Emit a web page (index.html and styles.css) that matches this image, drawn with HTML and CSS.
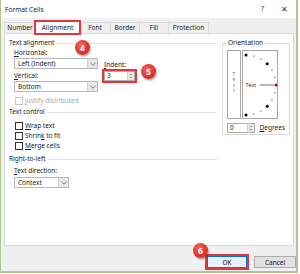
FILE: index.html
```html
<!DOCTYPE html>
<html>
<head>
<meta charset="utf-8">
<title>Format Cells</title>
<link rel="stylesheet" href="styles.css">
</head>
<body>
<div class="window">
  <div class="titlebar">
    <span class="title">Format Cells</span>
    <span class="tb-btns"><span class="help">?</span><span class="close">✕</span></span>
  </div>
  <div class="client">
    <div class="tabs">
      <div class="tab t-number">Number</div>
      <div class="tab t-align active">Alignment</div>
      <div class="tab t-font">Font</div>
      <div class="tab t-border">Border</div>
      <div class="tab t-fill">Fill</div>
      <div class="tab t-prot">Protection</div>
    </div>
    <div class="panel">
      <div class="leftcol">
        <div class="group-h"><span>Text alignment</span><i class="rule"></i></div>
        <div class="align-grid">
          <div class="col1">
            <div class="lbl"><u>H</u>orizontal:</div>
            <div class="select w84"><span class="val">Left (Indent)</span><span class="arrow"><svg width="6" height="4" viewBox="0 0 6 4"><polyline points="0.5,0.8 3,3.2 5.5,0.8" fill="none" stroke="#606060" stroke-width="0.8"/></svg></span></div>
            <div class="lbl mt2"><u>V</u>ertical:</div>
            <div class="select w84"><span class="val">Bottom</span><span class="arrow"><svg width="6" height="4" viewBox="0 0 6 4"><polyline points="0.5,0.8 3,3.2 5.5,0.8" fill="none" stroke="#606060" stroke-width="0.8"/></svg></span></div>
          </div>
          <div class="col2">
            <div class="lbl"><u>I</u>ndent:</div>
            <div class="spin indent-spin"><span class="val">3</span><span class="spin-btns"><span class="up"></span><span class="down"></span></span></div>
          </div>
        </div>
        <div class="check disabled mt4"><span class="box"></span><span><u>J</u>ustify distributed</span></div>
        <div class="group-h mt1"><span>Text control</span><i class="rule"></i></div>
        <div class="check mt4"><span class="box"></span><span><u>W</u>rap text</span></div>
        <div class="check"><span class="box"></span><span>Shrin<u>k</u> to fit</span></div>
        <div class="check"><span class="box"></span><span><u>M</u>erge cells</span></div>
        <div class="group-h mt3"><span>Right-to-left</span><i class="rule short"></i></div>
        <div class="lbl sub mt2"><u>T</u>ext direction:</div>
        <div class="select w55 sub mt1"><span class="val">Context</span><span class="arrow"><svg width="6" height="4" viewBox="0 0 6 4"><polyline points="0.5,0.8 3,3.2 5.5,0.8" fill="none" stroke="#606060" stroke-width="0.8"/></svg></span></div>
      </div>
      <fieldset class="orient">
        <legend>Orientation</legend>
        <div class="dial">
          <div class="vtext"><span>T</span><span>e</span><span>x</span><span>t</span></div>
          <div class="arc">
            <svg width="34" height="67" viewBox="0 0 34 67">
              <g fill="#000">
                <circle cx="3" cy="4" r="1.5"/>
                <circle cx="10.8" cy="5" r="0.55"/>
                <circle cx="18" cy="8" r="0.55"/>
                <circle cx="24.2" cy="12.8" r="1.5"/>
                <circle cx="29" cy="19" r="0.55"/>
                <circle cx="32" cy="26.2" r="0.55"/>
                <circle cx="32" cy="41.8" r="0.55"/>
                <circle cx="29" cy="49" r="0.55"/>
                <circle cx="24.2" cy="55.2" r="1.5"/>
                <circle cx="18" cy="60" r="0.55"/>
                <circle cx="10.8" cy="63" r="0.55"/>
                <circle cx="3" cy="64" r="1.5"/>
              </g>
              <text x="2.6" y="35.8" class="dial-text">Text</text>
              <line x1="17" y1="34" x2="31" y2="34" stroke="#333" stroke-width="0.7"/>
              <circle cx="33" cy="34" r="1.5" fill="#c00000"/>
            </svg>
          </div>
        </div>
        <div class="deg-row">
          <div class="spin deg-spin"><span class="val">0</span><span class="spin-btns"><span class="up"></span><span class="down"></span></span></div>
          <span class="deg-lbl"><u>D</u>egrees</span>
        </div>
      </fieldset>
    </div>
    <div class="buttons">
      <div class="btn ok">OK</div>
      <div class="btn">Cancel</div>
    </div>
  </div>
  <span class="badge b4">4</span>
  <span class="badge b5">5</span>
  <span class="badge b6">6</span>
</div>
</body>
</html>
```
FILE: styles.css
```css
* { box-sizing: border-box; }
html, body { margin: 0; padding: 0; background: #ffffff; }
body {
  width: 300px;
  height: 274px;
  overflow: hidden;
  font-family: "Noto Sans", "Open Sans", sans-serif;
  font-size: 6.5px;
  color: #1a1a1a;
}
.window {
  position: relative;
  width: 298px;
  height: 273px;
  border-left: 1px solid #b2c78a;
  border-right: 2px solid #b2c78a;
  border-bottom: 2px solid #b2c78a;
  background: #f0f0f0;
  display: flex;
  flex-direction: column;
}
.titlebar {
  height: 18px;
  background: #ffffff;
  display: flex;
  align-items: center;
  justify-content: space-between;
  padding: 0 8px 0 4px;
}
.title { font-size: 6.6px; color: #222; }
.tb-btns { display: flex; gap: 17px; color: #333; }
.help { font-size: 7px; }
.close { font-size: 7.5px; }
.client {
  flex: 1;
  padding: 4px 2px 0 3px;
  display: flex;
  flex-direction: column;
}
.tabs {
  display: flex;
  height: 11px;
  align-items: flex-end;
}
.tab {
  height: 11px;
  border: 1px solid #d9d9d9;
  border-bottom: none;
  margin-right: -1px;
  background: #f0f0f0;
  display: flex;
  align-items: center;
  justify-content: center;
  line-height: 10px;
  color: #222;
}
.t-number { width: 32px; }
.t-align { width: 45px; }
.t-font { width: 32px; }
.t-border { width: 30px; }
.t-fill { width: 30px; }
.t-prot { width: 41px; }
.tab.active {
  background: #ffffff;
  height: 13px;
  margin-bottom: -1px;
  position: relative;
  z-index: 2;
  outline: 2px solid #e8343b;
  outline-offset: -1px;
}
.panel {
  height: 213px;
  background: #ffffff;
  border: 1px solid #d9d9d9;
  padding: 4px 2px 0 4px;
  display: flex;
  gap: 5px;
  align-items: flex-start;
}
.leftcol { width: 208px; display: flex; flex-direction: column; }
.group-h {
  display: flex;
  align-items: center;
  gap: 3px;
  height: 10px;
  line-height: 10px;
  color: #222;
}
.rule { flex: 1; height: 1px; background: #e3e3e3; }
.lbl { height: 10px; line-height: 10px; }
.mt1 { margin-top: 1px; }
.mt2 { margin-top: 2px; }
.mt3 { margin-top: 3px; }
.mt4 { margin-top: 4px; }
.sub { margin-left: 5px; }
.align-grid {
  margin-left: 5px;
  display: grid;
  grid-template-columns: 84px auto;
  column-gap: 6px;
}
.col1 { display: flex; flex-direction: column; }
.col2 { padding-top: 12px; display: flex; flex-direction: column; align-items: flex-start; }
.col2 .lbl { margin-bottom: 1px; }
.select {
  height: 11px;
  border: 1px solid #b9b9b9;
  background: #fff;
  display: flex;
  align-items: stretch;
}
.w84 { width: 84px; }
.w55 { width: 55px; }
.select .val { flex: 1; line-height: 9px; padding-left: 3px; }
.select .arrow {
  width: 10px;
  background: #e8e8e8;
  border-left: 1px solid #d0d0d0;
  display: flex;
  align-items: center;
  justify-content: center;
}
.spin {
  height: 10px;
  border: 1px solid #b0b0b0;
  background: #fff;
  display: flex;
}
.spin .val { flex: 1; line-height: 8px; padding-left: 2px; }
.spin-btns {
  width: 7px;
  background: #e6e6e6;
  border-left: 1px solid #d0d0d0;
  display: flex;
  flex-direction: column;
  align-items: center;
  justify-content: space-evenly;
}
.up, .down { width: 0; height: 0; border-left: 1.6px solid transparent; border-right: 1.6px solid transparent; }
.up { border-bottom: 1.8px solid #404040; }
.down { border-top: 1.8px solid #404040; }
.indent-spin {
  width: 31px;
  outline: 2px solid #e8343b;
  outline-offset: 0px;
}
.check {
  height: 10px;
  display: flex;
  align-items: center;
  gap: 2px;
  margin-left: 6px;
  line-height: 10px;
}
.check .box { width: 8px; height: 8px; border: 1px solid #333; background: #fff; }
.check.disabled { color: #a8a8a8; }
.check.disabled .box { border-color: #c8c8c8; }
.orient {
  width: 68px;
  margin: 0;
  padding: 0 4px 1px 4px;
  border: 1px solid #dcdcdc;
  min-width: 0;
}
.orient legend {
  padding: 0 1px;
  line-height: 10px;
  height: 10px;
  color: #222;
}
.dial { display: flex; gap: 1px; margin-top: 2px; height: 69px; }
.vtext {
  width: 14px;
  border: 1px solid #a8a8a8;
  display: flex;
  flex-direction: column;
  align-items: center;
  justify-content: center;
  padding-bottom: 4px;
  color: #808080;
  font-size: 5px;
}
.vtext span { display: block; line-height: 5.5px; height: 5.5px; }
.arc { width: 36px; border: 1px solid #a8a8a8; }
.arc svg { display: block; overflow: visible; }
.dial-text { font-family: "Noto Sans", "Open Sans", sans-serif; font-size: 5.4px; fill: #333; }
.deg-row { display: flex; align-items: center; gap: 5px; margin-top: 4px; height: 10px; }
.deg-spin { width: 30px; }
.deg-lbl { line-height: 10px; }
.buttons {
  display: flex;
  justify-content: flex-end;
  gap: 7px;
  margin-top: 10px;
  margin-right: -2px;
}
.btn {
  width: 42px;
  height: 12px;
  border: 1px solid #adadad;
  background: #e1e1e1;
  display: flex;
  align-items: center;
  justify-content: center;
  color: #111;
}
.btn.ok {
  width: 40px;
  background: #e5f1fb;
  border-color: #0078d7;
  outline: 2px solid #e8343b;
  outline-offset: 0px;
}
.badge {
  position: absolute;
  width: 15px;
  height: 15px;
  border-radius: 50%;
  background: radial-gradient(circle at 40% 35%, #f4675d 0%, #e0322f 55%, #c8221f 100%);
  color: #fff;
  font-weight: bold;
  font-size: 8.5px;
  display: flex;
  align-items: center;
  justify-content: center;
  box-shadow: 1px 1.5px 2px rgba(0,0,0,0.35);
  z-index: 5;
}
.b4 { left: 74px; top: 40px; }
.b5 { left: 140px; top: 64px; }
.b6 { left: 192px; top: 243px; }
```
